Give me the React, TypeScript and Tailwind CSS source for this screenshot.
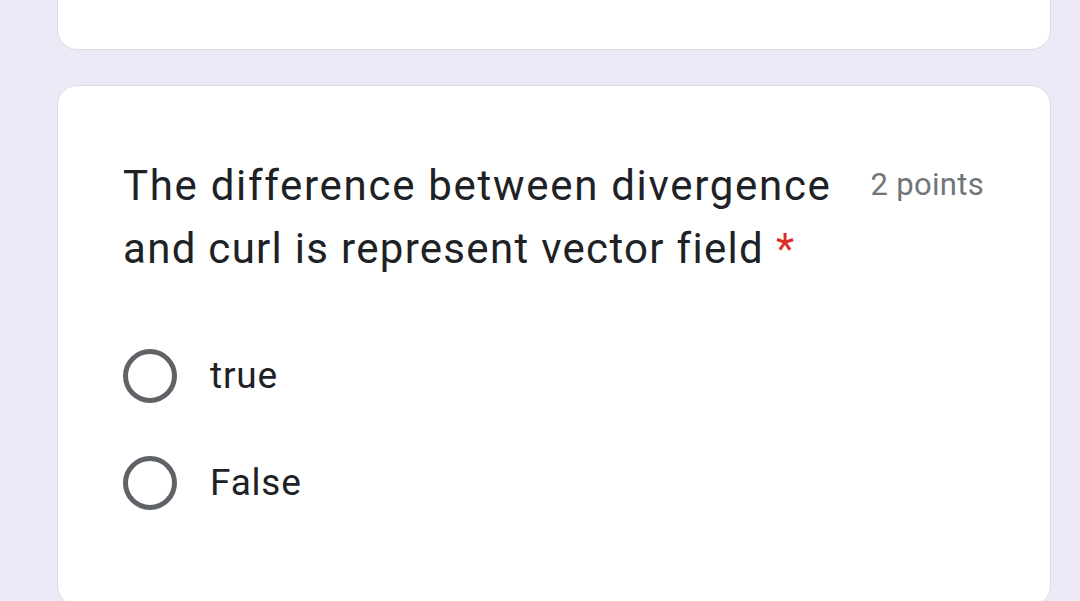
export default function App() {
  return (
    <div className="h-[601px] overflow-hidden bg-[#ede9f7] pl-[57px] pr-[29px]" style={{ fontFamily: 'Roboto, "Open Sans", sans-serif' }}>
      <div className="-mt-[40px] h-[90px] rounded-[20px] border border-[#dcdae3] bg-white" />
      <div className="mt-[35px] h-[521px] rounded-[20px] border border-[#dcdae3] bg-white pl-[65px] pr-[66px] pt-[68px]">
        <div className="flex items-start justify-between gap-6">
          <h1 className="text-[42px] leading-[63px] tracking-[1.7px] text-[#202124]">
            The difference between divergence
            <br />
            <span className="tracking-[1.3px]">and curl is represent vector field</span>
            <span className="ml-[12px] text-[#d93025]">*</span>
          </h1>
          <span className="mt-[13px] shrink-0 whitespace-nowrap text-[31px] leading-[36px] tracking-[0.3px] text-[#70757a]">2 points</span>
        </div>
        <div className="mt-[69px] flex flex-col gap-[53px]">
          {['true', 'False'].map((o) => (
            <div key={o} className="flex items-center gap-[33px]">
              <div className="h-[54px] w-[54px] rounded-full border-[5px] border-[#5f6368]" />
              <span className="text-[37px] leading-[54px] tracking-[0.8px] text-[#202124]">{o}</span>
            </div>
          ))}
        </div>
      </div>
    </div>
  );
}
